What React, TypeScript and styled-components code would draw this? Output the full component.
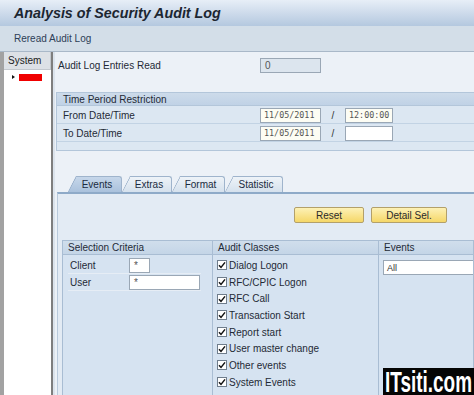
import React from 'react';
import styled, { createGlobalStyle } from 'styled-components';

const GlobalStyle = createGlobalStyle`
  html, body { margin: 0; padding: 0; }
  body {
    font-family: "Liberation Sans", Arial, sans-serif;
    font-size: 10px;
    color: #1f2a36;
    background: #ecf1f7;
  }
`;

const Page = styled.div`
  width: 474px;
  height: 395px;
  overflow: hidden;
  position: relative;
  display: flex;
  flex-direction: column;
`;

const TitleBar = styled.div`
  height: 26px;
  flex: none;
  display: flex;
  align-items: center;
  padding-left: 14px;
  background: linear-gradient(#e7eef7, #b4c8df);
`;

const Title = styled.h1`
  margin: 0;
  font-size: 14.3px;
  font-weight: bold;
  font-style: italic;
  color: #1c2631;
`;

const Toolbar = styled.div`
  height: 25px;
  flex: none;
  display: flex;
  align-items: center;
  padding-left: 14px;
  background: #d3dee8;
  border-bottom: 1px solid #a9b8c8;
  color: #2d4057;
`;

const Body = styled.div`
  flex: 1;
  display: flex;
  min-height: 0;
`;

const Sidebar = styled.div`
  width: 47px;
  flex: none;
  background: #fff;
  border-left: 4px solid #a2a2a2;
  border-right: 2px solid #7e7e7e;
`;

const SidebarHeader = styled.div`
  height: 17px;
  display: flex;
  align-items: center;
  padding-left: 4px;
  background: #dde1e6;
  border-bottom: 1px solid #c3c8ce;
  border-right: 1px solid #c3c8ce;
  color: #222;
`;

const TreeRow = styled.div`
  display: flex;
  align-items: center;
  height: 10px;
  padding-left: 8px;
  margin-top: 2px;
`;

const Arrow = styled.span`
  width: 0;
  height: 0;
  border-top: 2.5px solid transparent;
  border-bottom: 2.5px solid transparent;
  border-left: 3px solid #111;
  margin-right: 4px;
`;

const RedBar = styled.span`
  width: 23px;
  height: 7px;
  background: #f00000;
`;

const Main = styled.div`
  flex: 1;
  min-width: 0;
  border-left: 2px solid #dbe3ec;
  background: #ecf1f7;
  display: flex;
  flex-direction: column;
`;

const FieldRow = styled.div`
  display: flex;
  align-items: center;
  height: 15px;
  margin: 6px 0 0 3px;
`;

const Label = styled.span<{ $w: number }>`
  width: ${p => p.$w}px;
  flex: none;
  color: #1f2a36;
`;

const Input = styled.div<{ $w: number; $bg?: string; $mono?: boolean }>`
  width: ${p => p.$w}px;
  height: 15px;
  box-sizing: border-box;
  flex: none;
  border: 1px solid #9aa7b5;
  background: ${p => p.$bg || '#fff'};
  display: flex;
  align-items: center;
  padding-left: ${p => (p.$mono ? '3px' : '4px')};
  color: #555;
  font-family: ${p => (p.$mono ? '"DejaVu Sans Mono", "Liberation Mono", monospace' : '"Liberation Sans", Arial, sans-serif')};
  font-size: ${p => (p.$mono ? '8.4px' : '10px')};
`;

const Group = styled.div`
  margin: 19px 0 0 1px;
  background: #dce7f2;
  border: 1px solid #b3c6da;
  border-right: none;
  height: 59px;
  box-sizing: border-box;
`;

const GroupHeader = styled.div`
  height: 12px;
  display: flex;
  align-items: center;
  padding-left: 6px;
  background: linear-gradient(#cddbea, #c0d2e6);
  border-bottom: 1px solid #b3c6da;
`;

const GroupRow = styled.div`
  height: 16px;
  display: flex;
  align-items: center;
  padding-left: 6px;
  padding-top: 1px;
  border-bottom: 1px solid #c2d3e4;
`;

const Slash = styled.span`
  width: 24px;
  text-align: center;
  color: #333;
`;

const TabStrip = styled.div`
  display: flex;
  margin: 25px 0 0 13px;
  height: 16px;
`;

const Tab = styled.div<{ $active?: boolean; $w: number }>`
  position: relative;
  width: ${p => p.$w}px;
  height: 16px;
  box-sizing: border-box;
  padding-left: 5px;
  display: flex;
  align-items: center;
  justify-content: center;
  color: #1a2b40;
  background: ${p => (p.$active ? 'linear-gradient(#c6d7ea, #aac1dc)' : 'linear-gradient(#eef3f8, #d5e1ed)')};
  border-top: 1px solid #9fb4cc;
  border-right: 1px solid #9fb4cc;
  border-radius: 0 3px 0 0;
  clip-path: polygon(8px 0, 100% 0, 100% 100%, 0 100%);

  &::before {
    content: '';
    position: absolute;
    left: 0;
    top: 0;
    width: 8px;
    height: 100%;
    background: linear-gradient(to top left, transparent calc(50% - 0.8px), #8ea6c2 50%, transparent calc(50% + 0.8px));
  }
`;

const TabPanel = styled.div`
  flex: 1;
  margin-left: 2px;
  background: #e3ebf4;
  border-top: 2px solid #8eaac8;
  border-left: 1px solid #b9cadc;
  display: flex;
  flex-direction: column;
`;

const ButtonRow = styled.div`
  display: flex;
  gap: 7px;
  margin: 13px 0 0 236px;
`;

const Button = styled.button<{ $w: number }>`
  width: ${p => p.$w}px;
  height: 16px;
  padding: 0;
  font-family: "Liberation Sans", Arial, sans-serif;
  font-size: 10px;
  color: #2a2a2a;
  background: linear-gradient(#fdf1b6, #f5d768);
  border: 1px solid #b3a06a;
  border-radius: 2px;
`;

const Table = styled.div`
  flex: 1;
  margin: 17px 0 0 4px;
  display: grid;
  grid-template-columns: 150px 166px 1fr;
  grid-template-rows: 14px 1fr;
  border-left: 1px solid #a9bdd3;
  border-top: 1px solid #a9bdd3;
`;

const HeadCell = styled.div`
  display: flex;
  align-items: center;
  padding-left: 5px;
  background: linear-gradient(#d0deec, #c4d5e7);
  border-right: 1px solid #a9bdd3;
  border-bottom: 1px solid #a9bdd3;
  color: #1f2a36;
`;

const Column = styled.div`
  background: #d6e3f1;
  border-right: 1px solid #a9bdd3;
  padding-top: 2px;
`;

const CritRow = styled.div`
  height: 16px;
  display: flex;
  align-items: center;
  margin: 0 11px 0 5px;
  padding-left: 2px;
  border-bottom: 1px solid #e6edf5;
`;

const CheckRow = styled.div`
  height: 16.7px;
  display: flex;
  align-items: center;
  padding-left: 4px;
  gap: 2px;
`;

const Box = styled.span`
  width: 10px;
  height: 10px;
  box-sizing: border-box;
  flex: none;
  background: #fff;
  border: 1px solid #6f7d8c;
  display: flex;
  align-items: center;
  justify-content: center;
`;

const Select = styled.div`
  height: 13px;
  margin: 3px 0 0 4px;
  background: #fff;
  border: 1px solid #9aa7b5;
  border-right: none;
  display: flex;
  align-items: center;
  padding-left: 3px;
  color: #333;
  font-size: 9px;
`;

const Watermark = styled.svg`
  position: absolute;
  right: 0;
  bottom: 0;
  display: block;
`;

const tabs = [
  { label: 'Events', w: 54, active: true },
  { label: 'Extras', w: 50 },
  { label: 'Format', w: 53 },
  { label: 'Statistic', w: 58 },
];

const auditClasses = [
  'Dialog Logon',
  'RFC/CPIC Logon',
  'RFC Call',
  'Transaction Start',
  'Report start',
  'User master change',
  'Other events',
  'System Events',
];

const Check = () => (
  <svg width="8" height="8" viewBox="0 0 8 8">
    <path d="M1 4.2 L3 6.4 L7 1.4" fill="none" stroke="#111" strokeWidth="1.5" />
  </svg>
);

export default function App() {
  return (
    <Page>
      <GlobalStyle />
      <TitleBar>
        <Title>Analysis of Security Audit Log</Title>
      </TitleBar>
      <Toolbar>Reread Audit Log</Toolbar>
      <Body>
        <Sidebar>
          <SidebarHeader>System</SidebarHeader>
          <TreeRow>
            <Arrow />
            <RedBar />
          </TreeRow>
        </Sidebar>
        <Main>
          <FieldRow>
            <Label $w={202}>Audit Log Entries Read</Label>
            <Input $w={61} $bg="#dce5ee">0</Input>
          </FieldRow>

          <Group>
            <GroupHeader>Time Period Restriction</GroupHeader>
            <GroupRow>
              <Label $w={197}>From Date/Time</Label>
              <Input $w={61} $bg="#fdfdf4" $mono>11/05/2011</Input>
              <Slash>/</Slash>
              <Input $w={48} $bg="#fdfdf4" $mono>12:00:00</Input>
            </GroupRow>
            <GroupRow>
              <Label $w={197}>To Date/Time</Label>
              <Input $w={61} $bg="#fdfdf4" $mono>11/05/2011</Input>
              <Slash>/</Slash>
              <Input $w={48} />
            </GroupRow>
          </Group>

          <TabStrip>
            {tabs.map(t => (
              <Tab key={t.label} $w={t.w} $active={t.active}>
                {t.label}
              </Tab>
            ))}
          </TabStrip>

          <TabPanel>
            <ButtonRow>
              <Button $w={70}>Reset</Button>
              <Button $w={76}>Detail Sel.</Button>
            </ButtonRow>

            <Table>
              <HeadCell>Selection Criteria</HeadCell>
              <HeadCell>Audit Classes</HeadCell>
              <HeadCell>Events</HeadCell>

              <Column>
                <CritRow>
                  <Label $w={59}>Client</Label>
                  <Input $w={21}>*</Input>
                </CritRow>
                <CritRow>
                  <Label $w={59}>User</Label>
                  <Input $w={71}>*</Input>
                </CritRow>
              </Column>

              <Column>
                {auditClasses.map(c => (
                  <CheckRow key={c}>
                    <Box>
                      <Check />
                    </Box>
                    {c}
                  </CheckRow>
                ))}
              </Column>

              <Column>
                <Select>All</Select>
              </Column>
            </Table>
          </TabPanel>
        </Main>
      </Body>
      <Watermark width="91" height="27" viewBox="0 0 91 27">
        <rect width="91" height="27" fill="#050505" />
        <text
          x="2"
          y="23.5"
          fill="#fff"
          fontFamily='"Liberation Sans", Arial, sans-serif'
          fontWeight="bold"
          fontSize="29"
          textLength="87"
          lengthAdjust="spacingAndGlyphs"
        >
          ITsiti.com
        </text>
      </Watermark>
    </Page>
  );
}
